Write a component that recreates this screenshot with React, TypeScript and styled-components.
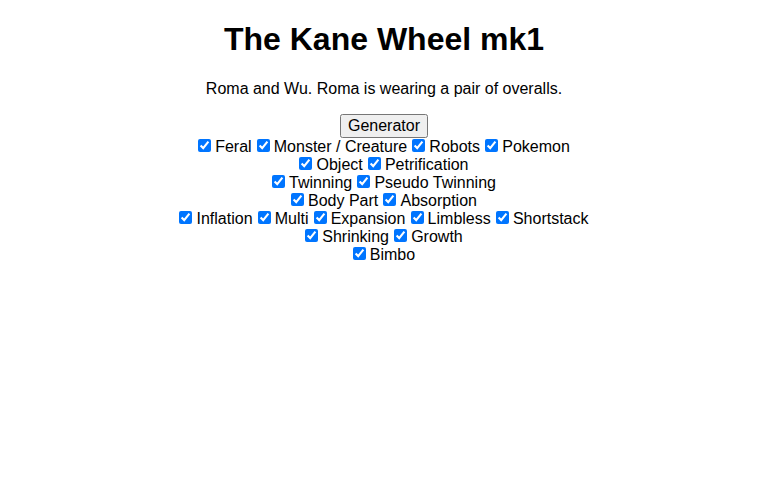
import React from "react";
import styled, {createGlobalStyle} from "styled-components";

const GlobalStyle = createGlobalStyle`
    body {
        margin: 0;
        font-family: "Liberation Sans", Arial, sans-serif;
        font-size: 16px;
        color: #000;
        background: #fff;
    }
`,

    Page = styled.div`
        text-align: center;
`,

    Title = styled.h1`
        font-size: 32px;
        font-weight: bold;
        margin: 21.44px 0;
`,

    Blurb = styled.p`
        margin: 16px 0;
`,

    Button = styled.button`
        font-family: inherit;
        font-size: 16px;
`,

    Row = styled.div`
        line-height: 18px;
`,

    Option = styled.label`
        display: inline-block;
        margin: 0 2.6px;
        white-space: nowrap;
`,

    Check = styled.input`
        width: 13px;
        height: 13px;
        margin: 0 4px 0 0;
        vertical-align: baseline;
`;

const rows: string[][] = [
    ["Feral", "Monster / Creature", "Robots", "Pokemon"],
    ["Object", "Petrification"],
    ["Twinning", "Pseudo Twinning"],
    ["Body Part", "Absorption"],
    ["Inflation", "Multi", "Expansion", "Limbless", "Shortstack"],
    ["Shrinking", "Growth"],
    ["Bimbo"]
];

export default function App () {

    return (
        <Page>
            <GlobalStyle />
            <Title>The Kane Wheel mk1</Title>
            <Blurb>Roma and Wu. Roma is wearing a pair of overalls.</Blurb>
            <div>
                <Button type="button">Generator</Button>
            </div>
            {rows.map((row, i) => (
                <Row key={i}>
                    {row.map((name) => (
                        <Option key={name}><Check type="checkbox" defaultChecked />{name}</Option>
                    ))}
                </Row>
            ))}
        </Page>
    );

}
